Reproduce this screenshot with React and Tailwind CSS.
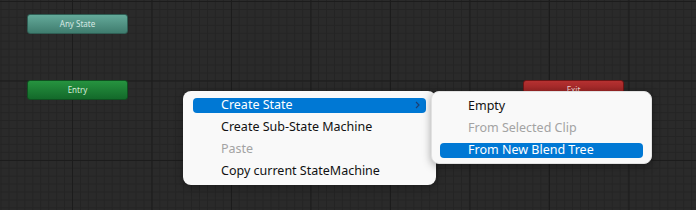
import React from 'react';

function StateNode({ label, className }) {
  return (
    <div
      className={`absolute h-5 w-[101px] rounded-[3px] border flex items-center justify-center text-[8px] leading-none ${className}`}
    >
      {label}
    </div>
  );
}

function Chevron() {
  return (
    <svg width="5" height="8" viewBox="0 0 5 8" className="absolute right-[6px] top-1/2 -translate-y-1/2">
      <path d="M1 1 L4 4 L1 7" fill="none" stroke="#1d3f73" strokeWidth="1.2" />
    </svg>
  );
}

function MenuItem({ label, active, disabled, sub, inset }) {
  return (
    <div className="h-[22px] flex items-center">
      <div
        className={`relative h-[15px] flex-1 rounded-[4px] flex items-center pl-[28px] leading-none ${inset} ${
          active ? 'bg-[#0078d4] text-white' : disabled ? 'text-[#a3a3a3]' : 'text-[#111111]'
        }`}
      >
        {label}
        {sub && <Chevron />}
      </div>
    </div>
  );
}

export default function App() {
  return (
    <div
      className="relative w-[696px] h-[210px] overflow-hidden bg-[#2a2a2a] bg-[linear-gradient(to_right,#1c1c1c_1px,transparent_1px),linear-gradient(to_bottom,#1c1c1c_1px,transparent_1px),linear-gradient(to_right,#242424_1px,transparent_1px),linear-gradient(to_bottom,#242424_1px,transparent_1px)] bg-[size:79.5px_79.5px,79.5px_79.5px,7.95px_7.95px,7.95px_7.95px] bg-[position:72px_0px,0px_1px,72px_0px,0px_1px]"
      style={{ fontFamily: '"Noto Sans", "Liberation Sans", sans-serif' }}
    >
      {/* state nodes */}
      <StateNode
        label="Any State"
        className="left-[27px] top-[14px] bg-[linear-gradient(to_bottom,#64aa9a,#3f7c6e)] border-[#2f5e54] text-[#d6e8e3]"
      />
      <StateNode
        label="Entry"
        className="left-[27px] top-[80px] bg-[linear-gradient(to_bottom,#26933f,#13692a)] border-[#0f4f20] text-[#d4ecd9]"
      />
      <StateNode
        label="Exit"
        className="left-[523px] top-[80px] bg-[linear-gradient(to_bottom,#b53131,#8c1d1d)] border-[#6e1515] text-[#f0d6d6]"
      />

      {/* context menu */}
      <div className="absolute left-[183px] top-[91px] w-[253px] rounded-[8px] bg-[#f9f9f9] py-[3px] text-[12.5px] shadow-[0_2px_8px_rgba(0,0,0,0.35)]">
        <MenuItem label="Create State" active sub inset="mx-[10px]" />
        <MenuItem label="Create Sub-State Machine" inset="mx-[10px]" />
        <MenuItem label="Paste" disabled inset="mx-[10px]" />
        <MenuItem label="Copy current StateMachine" inset="mx-[10px]" />
      </div>

      {/* submenu */}
      <div className="absolute left-[431px] top-[91px] w-[221px] rounded-[8px] bg-[#f9f9f9] pt-[3px] pb-[2px] text-[12.5px] border border-[#e2e2e2] shadow-[0_2px_8px_rgba(0,0,0,0.35)]">
        <MenuItem label="Empty" inset="mx-[8px]" />
        <MenuItem label="From Selected Clip" disabled inset="mx-[8px]" />
        <MenuItem label="From New Blend Tree" active inset="mx-[8px]" />
      </div>
    </div>
  );
}
